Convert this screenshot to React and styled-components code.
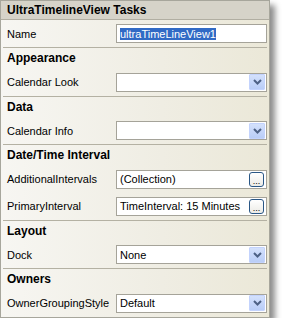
import React from 'react';
import styled, { createGlobalStyle } from 'styled-components';

const GlobalStyle = createGlobalStyle`
  html, body {
    margin: 0;
    padding: 0;
    background: #ffffff;
  }
  body {
    font-family: "Liberation Sans", Arial, sans-serif;
    font-size: 11px;
    color: #000;
  }
`;

const Panel = styled.div`
  width: 268px;
  border: 1px solid #a7a69c;
  background: linear-gradient(to right, #f7f6f2 0%, #efede3 60%, #ebe8d8 100%);
  box-shadow: 5px 5px 6px rgba(0, 0, 0, 0.45);
  display: flex;
  flex-direction: column;
`;

const Header = styled.div`
  height: 18px;
  display: flex;
  align-items: center;
  padding-left: 6px;
  background: #d6d3c9;
  border-bottom: 1px solid #b1aea2;
  font-weight: bold;
  font-size: 12px;
`;

const Separator = styled.div`
  height: 1px;
  margin: 0 2px;
  background: #b4b1a3;
`;

const SectionTitle = styled.div`
  height: 20.5px;
  display: flex;
  align-items: center;
  padding-left: 6px;
  font-weight: bold;
  font-size: 12px;
`;

const Row = styled.div`
  height: 27px;
  display: flex;
  align-items: center;
  padding: 0 2px 0 6px;
`;

const Label = styled.div`
  width: 109px;
  flex: none;
  white-space: nowrap;
`;

const Field = styled.div`
  flex: 1;
  height: 17px;
  display: flex;
  align-items: center;
  background: #ffffff;
  border: 1px solid #a5a399;
  padding: 0 1px 0 2px;
  white-space: nowrap;
  overflow: hidden;
`;

const Value = styled.span`
  flex: 1;
  padding-left: 1px;
  overflow: hidden;
`;

const Selected = styled.span`
  background: #316ac5;
  color: #ffffff;
  padding: 1px 0;
`;

const DropButton = styled.div`
  width: 14px;
  height: 14px;
  flex: none;
  display: flex;
  align-items: center;
  justify-content: center;
  background: linear-gradient(to bottom, #d4e1fc, #b9cdf7);
  border: 1px solid #c3d3fd;
  border-radius: 1px;
`;

const EllipsisButton = styled.div`
  width: 13px;
  height: 13px;
  flex: none;
  margin-right: 1px;
  display: flex;
  align-items: flex-end;
  justify-content: center;
  background: linear-gradient(to bottom, #ffffff, #ecebe6);
  border: 1px solid #2a5786;
  border-radius: 3px;
  font-size: 9px;
  line-height: 9px;
  letter-spacing: 0px;
  color: #000;
`;

function Chevron() {
  return (
    <svg width="9" height="6" viewBox="0 0 9 6">
      <path d="M1 1 L4.5 4.5 L8 1" fill="none" stroke="#4d6185" strokeWidth="2" />
    </svg>
  );
}

function Combo({ value }) {
  return (
    <Field>
      <Value>{value}</Value>
      <DropButton>
        <Chevron />
      </DropButton>
    </Field>
  );
}

function Ellipsis({ value }) {
  return (
    <Field>
      <Value>{value}</Value>
      <EllipsisButton>...</EllipsisButton>
    </Field>
  );
}

const sections = [
  { title: 'Appearance', rows: [{ label: 'Calendar Look', type: 'combo', value: '' }] },
  { title: 'Data', rows: [{ label: 'Calendar Info', type: 'combo', value: '' }] },
  {
    title: 'Date/Time Interval',
    rows: [
      { label: 'AdditionalIntervals', type: 'ellipsis', value: '(Collection)' },
      { label: 'PrimaryInterval', type: 'ellipsis', value: 'TimeInterval: 15 Minutes' },
    ],
  },
  { title: 'Layout', rows: [{ label: 'Dock', type: 'combo', value: 'None' }] },
  { title: 'Owners', rows: [{ label: 'OwnerGroupingStyle', type: 'combo', value: 'Default' }] },
];

export default function App() {
  return (
    <>
      <GlobalStyle />
      <Panel>
        <Header>UltraTimelineView Tasks</Header>
        <Row>
          <Label>Name</Label>
          <Field>
            <Value>
              <Selected>ultraTimeLineView1</Selected>
            </Value>
          </Field>
        </Row>
        {sections.map((s) => (
          <React.Fragment key={s.title}>
            <Separator />
            <SectionTitle>{s.title}</SectionTitle>
            {s.rows.map((r) => (
              <Row key={r.label}>
                <Label>{r.label}</Label>
                {r.type === 'combo' ? <Combo value={r.value} /> : <Ellipsis value={r.value} />}
              </Row>
            ))}
          </React.Fragment>
        ))}
      </Panel>
    </>
  );
}
